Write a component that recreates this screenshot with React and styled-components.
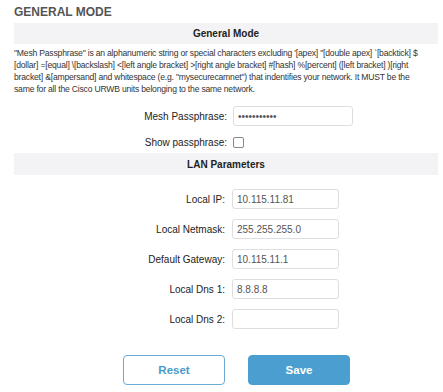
import React from 'react'
import styled, { createGlobalStyle } from 'styled-components'

const GlobalStyle = createGlobalStyle`
  body {
    margin: 0;
    background: #fff;
    font-family: 'Liberation Sans', Arial, sans-serif;
  }
`

const lanFields = [
  { label: 'Local IP', value: '10.115.11.81' },
  { label: 'Local Netmask', value: '255.255.255.0' },
  { label: 'Default Gateway', value: '10.115.11.1' },
  { label: 'Local Dns 1', value: '8.8.8.8' },
  { label: 'Local Dns 2', value: '' }
]

export default function App () {
  return (
    <>
      <GlobalStyle />
      <Page>
        <Title>GENERAL MODE</Title>
        <SectionBar>General Mode</SectionBar>
        <Note>
          "Mesh Passphrase" is an alphanumeric string or special characters excluding '[apex] "[double apex] `[backtick] $ [dollar] =[equal] \[backslash] &lt;[left angle bracket] &gt;[right angle bracket] #[hash] %[percent] ([left bracket] )[right bracket] &amp;[ampersand] and whitespace (e.g. "mysecurecamnet") that indentifies your network. It MUST be the same for all the Cisco URWB units belonging to the same network.
        </Note>
        <PassGrid>
          <Label>Mesh Passphrase:</Label>
          <TextInput type='password' defaultValue='secretpass1' $width={120} />
          <Label>Show passphrase:</Label>
          <Check />
        </PassGrid>
        <SectionBar $tall>LAN Parameters</SectionBar>
        <LanGrid>
          {lanFields.map(({ label, value }) => (
            <React.Fragment key={label}>
              <Label>{label}:</Label>
              <TextInput defaultValue={value} $width={107} />
            </React.Fragment>
          ))}
        </LanGrid>
        <Actions>
          <Button>Reset</Button>
          <Button $primary>Save</Button>
        </Actions>
      </Page>
    </>
  )
}

const Page = styled.div`
  padding: 5px 5px 0 14px;
  width: 443px;
  box-sizing: border-box;
`

const Title = styled.h1`
  margin: 0;
  font-size: 12px;
  font-weight: 700;
  color: #555;
  line-height: 15px;
`

const SectionBar = styled.div`
  margin-top: ${({ $tall }) => ($tall ? '5px' : '3px')};
  height: ${({ $tall }) => ($tall ? '22px' : '21px')};
  display: flex;
  align-items: center;
  justify-content: center;
  background: #f3f3f5;
  font-size: 10px;
  font-weight: 700;
  color: #222;
`

const Note = styled.p`
  margin: 3px 7px 0 0;
  font-size: 8.6px;
  letter-spacing: -0.2px;
  line-height: 12px;
  color: #333;
`

const PassGrid = styled.div`
  display: grid;
  grid-template-columns: 213px auto;
  justify-content: start;
  align-items: center;
  column-gap: 6px;
  row-gap: 11px;
  margin-top: 11px;
`

const LanGrid = styled.div`
  display: grid;
  grid-template-columns: 211px auto;
  justify-content: start;
  align-items: center;
  column-gap: 7px;
  row-gap: 10px;
  margin-top: 14px;
`

const Label = styled.label`
  justify-self: end;
  font-size: 10px;
  color: #222;
`

const TextInput = styled.input`
  width: ${({ $width }) => $width}px;
  height: 20px;
  box-sizing: border-box;
  border: 1px solid #dedede;
  border-radius: 3px;
  padding: 0 4px;
  font-family: 'Liberation Sans', Arial, sans-serif;
  font-size: 10px;
  color: #555;
  outline: none;
`

const Check = styled.span`
  width: 11px;
  height: 11px;
  box-sizing: border-box;
  border: 1px solid #888;
  border-radius: 2px;
`

const Actions = styled.div`
  display: flex;
  justify-content: center;
  gap: 23px;
  margin-top: 26px;
  padding-left: 21px;
`

const Button = styled.button`
  width: 102px;
  height: 30px;
  box-sizing: border-box;
  border-radius: 4px;
  border: 1px solid ${({ $primary }) => ($primary ? '#4a9fd0' : '#6aaad4')};
  background: ${({ $primary }) => ($primary ? '#4a9fd0' : '#fff')};
  color: ${({ $primary }) => ($primary ? '#fff' : '#4a9acb')};
  font-family: 'Liberation Sans', Arial, sans-serif;
  font-size: 11.5px;
  font-weight: 700;
`
